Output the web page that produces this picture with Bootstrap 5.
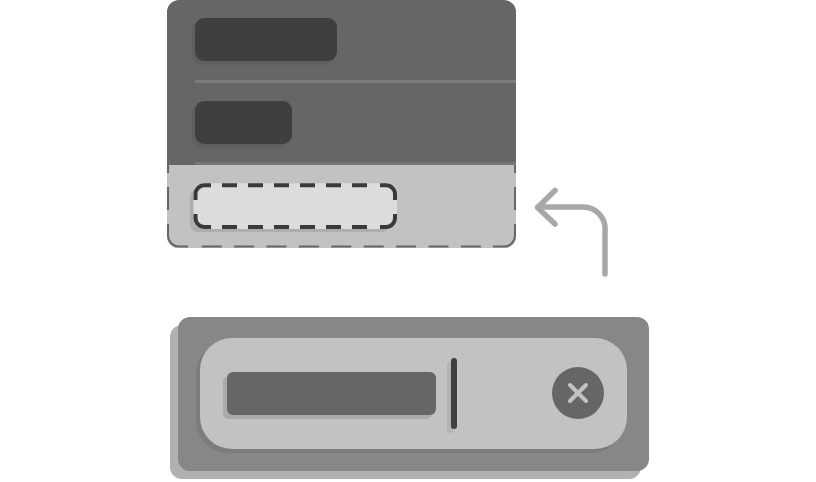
<!DOCTYPE html>
<html lang="en">
<head>
<meta charset="utf-8">
<title>Reorder illustration</title>
<link rel="stylesheet" href="https://cdn.jsdelivr.net/npm/bootstrap@5.3.0/dist/css/bootstrap.min.css">
<style>
html, body { margin: 0; height: 482px; overflow: hidden; background: #fff; }
.stage { padding-left: 167px; width: 816px; height: 482px; }
.list-card { width: 349px; height: 247.500px; background: #666; border-radius: 12px; overflow: hidden; }
.list-row { height: 82.500px; margin-left: 28px; padding-top: 18.400px; border-bottom: 3px solid #7c7c7c; }
.list-row + .list-row { height: 82.500px; padding-top: 18.500px; border-bottom: 3px solid #767676; }
.label-bar { height: 42.600px; background: #3f3f3f; border-radius: 9px; box-shadow: -3.500px 3.500px 0 #5f5f5f; }
.w-long { width: 142px; }
.w-short { width: 97px; }
.drop-panel { height: 82.500px; background: #c2c2c2; }
.drop-lines { top: 0; left: 0; }
.back-arrow { margin: 187px 0 0 17px; }
.search-card { width: 471px; height: 154px; margin: 37.500px 0 0 11px; padding: 21px 22px 22px; background: #878787; border-radius: 12px; box-shadow: -8px 8px 0 #b1b1b1; }
.search-box { height: 111px; padding: 0 23px 0 27px; background: #c2c2c2; border-radius: 32px; box-shadow: -4px 4px 0 #7c7c7c; }
.typed-bar { width: 209px; height: 43px; background: #666; border-radius: 6px; box-shadow: -4px 4px 0 #aaa; }
.caret-bar { width: 6px; height: 71px; margin-left: 15px; background: #3f3f3f; border-radius: 3px; box-shadow: -4px 4px 0 #b3b3b3; }
.clear-btn { width: 52px; height: 52px; background: #666; }
</style>
</head>
<body>
<div class="stage d-flex flex-column">
  <div class="d-flex align-items-start">
    <div class="list-card flex-shrink-0">
      <div class="list-row"><div class="label-bar w-long"></div></div>
      <div class="list-row"><div class="label-bar w-short"></div></div>
      <div class="drop-panel position-relative">
        <svg class="drop-lines position-absolute d-block" width="349" height="82.500" viewBox="0 0 349 82.500" fill="none" aria-hidden="true">
          <g stroke="#666" stroke-width="2">
            <path d="M1 0V8M1 22V45M1 59V70.500a11 11 0 0 0 11 11H21"/>
            <path d="M34.700 81.500H314.700" stroke-dasharray="20 12.400"/>
            <path d="M326 81.500H337a11 11 0 0 0 11-11V59M348 45V22M348 8V0"/>
          </g>
          <rect x="23" y="23" width="200" height="44.300" rx="9" fill="#aeaeae"/>
          <rect x="26.500" y="18.300" width="203.500" height="45.700" rx="10" fill="#dcdcdc"/>
          <g stroke="#3a3a3a" stroke-width="4">
            <path d="M44 20.300H37.500a9 9 0 0 0-9 9V35M28.500 49V53a9 9 0 0 0 9 9H44"/>
            <path d="M55 20.300H201M55 62H201" stroke-dasharray="15 11"/>
            <path d="M213 20.300H219a9 9 0 0 1 9 9V35M228 49V53a9 9 0 0 1-9 9H213"/>
          </g>
        </svg>
      </div>
    </div>
    <svg class="back-arrow flex-shrink-0" width="80" height="92" viewBox="0 0 80 92" fill="none" stroke="#a8a8a8" stroke-width="5.500" stroke-linecap="round" stroke-linejoin="round" aria-hidden="true">
      <path d="M72 87V44a22 22 0 0 0-22-24H5"/>
      <path d="M22 3.500 4.500 20.500 22 37"/>
    </svg>
  </div>
  <div class="search-card flex-shrink-0">
    <div class="search-box d-flex align-items-center">
      <div class="typed-bar flex-shrink-0"></div>
      <div class="caret-bar flex-shrink-0"></div>
      <div class="clear-btn rounded-circle ms-auto flex-shrink-0 d-flex align-items-center justify-content-center">
        <svg width="24" height="24" viewBox="0 0 24 24" fill="none" stroke="#c2c2c2" stroke-width="4" stroke-linecap="round" aria-hidden="true">
          <path d="M4 4 20 20M20 4 4 20"/>
        </svg>
      </div>
    </div>
  </div>
</div>
<script src="https://cdn.jsdelivr.net/npm/bootstrap@5.3.0/dist/js/bootstrap.bundle.min.js"></script>
</body>
</html>
